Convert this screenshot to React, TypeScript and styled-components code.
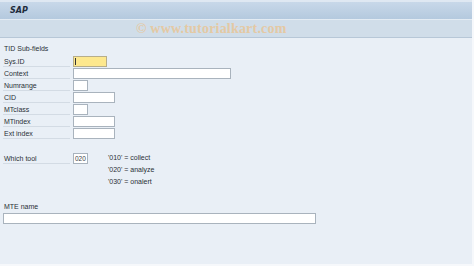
import React from 'react';
import styled, { createGlobalStyle } from 'styled-components';

const GlobalStyle = createGlobalStyle`
  html, body {
    margin: 0;
    padding: 0;
    background: #f6f8fb;
  }
  body {
    font-family: "Liberation Sans", Arial, sans-serif;
  }
`;

interface IField {
  label: string;
  width: number;
  focused?: boolean;
}

const fields: IField[] = [
  { label: 'Sys.ID', width: 34, focused: true },
  { label: 'Context', width: 158 },
  { label: 'Numrange', width: 15 },
  { label: 'CID', width: 42 },
  { label: 'MTclass', width: 15 },
  { label: 'MTindex', width: 42 },
  { label: 'Ext index', width: 42 },
];

const toolOptions = ["'010' = collect", "'020' = analyze", "'030' = onalert"];

export default function App() {
  return (
    <>
      <GlobalStyle />
      <Screen>
        <TitleBar>
          <Title>SAP</Title>
        </TitleBar>
        <Toolbar>
          <Watermark>© www.tutorialkart.com</Watermark>
        </Toolbar>

        <Content>
          <SectionTitle>TID Sub-fields</SectionTitle>
          <Fields>
            {fields.map((f) => (
              <Row key={f.label}>
                <Label>{f.label}</Label>
                <Input $width={f.width} $focused={f.focused}>
                  {f.focused && <Caret />}
                </Input>
              </Row>
            ))}
          </Fields>

          <ToolBlock>
            <Row>
              <Label>Which tool</Label>
              <Input $width={15}>
                <Mono>020</Mono>
              </Input>
            </Row>
            <Options>
              {toolOptions.map((o) => (
                <Option key={o}>{o}</Option>
              ))}
            </Options>
          </ToolBlock>

          <NameBlock>
            <PlainLabel>MTE name</PlainLabel>
            <Input $width={313} />
          </NameBlock>
        </Content>
      </Screen>
    </>
  );
}

const Screen = styled.div`
  width: 472px;
  height: 264px;
  background: #e9eff6;
  display: flex;
  flex-direction: column;
  overflow: hidden;
`;

const TitleBar = styled.div`
  height: 19px;
  box-sizing: border-box;
  border-top: 2px solid #dfe8f2;
  background: linear-gradient(to bottom, #c8d8e9, #b4c9de);
  display: flex;
  align-items: center;
  padding-left: 10px;
`;

const Title = styled.div`
  font-family: "DejaVu Sans", Verdana, sans-serif;
  font-weight: bold;
  font-style: italic;
  font-size: 8px;
  color: #1e2c3c;
`;

const Toolbar = styled.div`
  height: 19px;
  box-sizing: border-box;
  background: #d0dde9;
  border-top: 1px solid #e3ebf3;
  border-bottom: 1px solid #b7c7d7;
  display: flex;
  align-items: center;
  padding-left: 136px;
`;

const Watermark = styled.div`
  font-family: "Liberation Serif", "Times New Roman", serif;
  font-weight: bold;
  font-size: 14px;
  color: #e4c9a4;
  letter-spacing: 0.2px;
`;

const Content = styled.div`
  padding: 5px 0 0 3px;
  font-size: 7px;
  color: #2a2f36;
  display: flex;
  flex-direction: column;
`;

const SectionTitle = styled.div`
  height: 11px;
  line-height: 11px;
  padding-left: 1px;
`;

const Fields = styled.div`
  display: flex;
  flex-direction: column;
  margin-top: 1px;
`;

const Row = styled.div`
  display: flex;
  align-items: center;
  height: 12px;
  gap: 3px;
`;

const Label = styled.div`
  width: 67px;
  height: 11px;
  line-height: 11px;
  padding-left: 1px;
  box-sizing: border-box;
  border-bottom: 1px solid #d3dbe4;
`;

const PlainLabel = styled.div`
  height: 11px;
  line-height: 11px;
  padding-left: 1px;
`;

const Input = styled.div<{ $width: number; $focused?: boolean }>`
  width: ${(p) => p.$width}px;
  height: 11px;
  box-sizing: border-box;
  border: 1px solid ${(p) => (p.$focused ? '#b7ae8a' : '#a9b3bd')};
  background: ${(p) => (p.$focused ? '#fde88e' : '#ffffff')};
  display: flex;
  align-items: center;
  padding-left: 1px;
`;

const Caret = styled.div`
  width: 1px;
  height: 7px;
  background: #333;
`;

const Mono = styled.span`
  font-size: 6.5px;
  color: #3a3f46;
`;

const ToolBlock = styled.div`
  display: flex;
  align-items: flex-start;
  margin-top: 13px;
`;

const Options = styled.div`
  display: flex;
  flex-direction: column;
  margin-left: 20px;
`;

const Option = styled.div`
  height: 12px;
  line-height: 12px;
`;

const NameBlock = styled.div`
  display: flex;
  flex-direction: column;
  margin-top: 13px;
  gap: 1px;
`;
